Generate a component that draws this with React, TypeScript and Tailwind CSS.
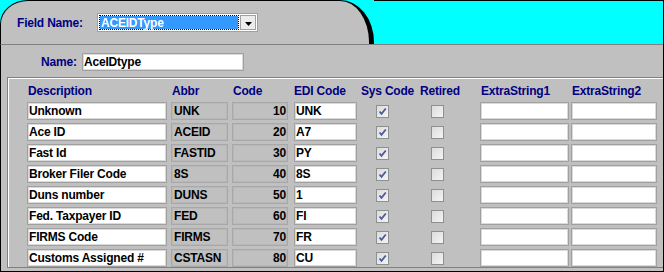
import React from "react";

type Row = {
    desc: string;
    abbr: string;
    code: string;
    edi: string;
    sys: boolean;
    retired: boolean;
};

const rows: Row[] = [
    { desc: "Unknown", abbr: "UNK", code: "10", edi: "UNK", sys: true, retired: false },
    { desc: "Ace ID", abbr: "ACEID", code: "20", edi: "A7", sys: true, retired: false },
    { desc: "Fast Id", abbr: "FASTID", code: "30", edi: "PY", sys: true, retired: false },
    { desc: "Broker Filer Code", abbr: "8S", code: "40", edi: "8S", sys: true, retired: false },
    { desc: "Duns number", abbr: "DUNS", code: "50", edi: "1", sys: true, retired: false },
    { desc: "Fed. Taxpayer ID", abbr: "FED", code: "60", edi: "FI", sys: true, retired: false },
    { desc: "FIRMS Code", abbr: "FIRMS", code: "70", edi: "FR", sys: true, retired: false },
    { desc: "Customs Assigned #", abbr: "CSTASN", code: "80", edi: "CU", sys: true, retired: false },
];

function Check({ checked }: { checked: boolean }) {
    return (
        <div className="w-[13px] h-[13px] shrink-0 border border-[#8e8f8f] bg-gradient-to-br from-[#dcdcdc] to-[#f4f4f4] flex items-center justify-center">
            {checked && (
                <svg width="9" height="9" viewBox="0 0 9 9">
                    <path d="M1.5 4.5 L3.5 6.8 L7.8 1.5" fill="none" stroke="#4a5a9c" strokeWidth="1.8" />
                </svg>
            )}
        </div>
    );
}

function WhiteBox({ className, children }: { className: string; children?: React.ReactNode }) {
    return (
        <div
            className={`h-[18px] shrink-0 bg-white border border-[#a0a0a0] shadow-[inset_0_0_0_1px_#dadada] pl-[1px] leading-[16px] text-black whitespace-nowrap overflow-hidden ${className}`}
        >
            {children}
        </div>
    );
}

function GrayBox({ className, children }: { className: string; children?: React.ReactNode }) {
    return (
        <div
            className={`h-[18px] shrink-0 bg-[#c0c0c0] border border-[#a8a8a8] shadow-[inset_0_0_0_1px_#b8b8b8] leading-[16px] text-black whitespace-nowrap overflow-hidden ${className}`}
        >
            {children}
        </div>
    );
}

export default function App() {
    return (
        <div className="w-[664px] h-[272px] flex flex-col bg-[#00ffff] border-r border-b border-black font-['Liberation_Sans',Arial,sans-serif] text-[12px] font-bold tracking-[-0.2px] overflow-hidden">
            {/* top tab */}
            <div className="flex h-[44px] shrink-0">
                <div className="w-[374px] h-[44px] shrink-0 bg-[#c0c0c0] border-t border-l border-r-[5px] border-black rounded-tl-[28px_24px] rounded-tr-[34px_42px] flex items-center pl-[16px]">
                    <div className="w-[80px] text-[#000080]">Field Name:</div>
                    <div className="w-[161px] h-[19px] border border-[#a0a0a0] bg-white p-[1px] flex gap-[1px]">
                        <div className="flex-1 bg-white border border-dotted border-black">
                            <div className="h-full bg-[#3399ff] text-white leading-[15px] pl-[1px]">ACEIDType</div>
                        </div>
                        <div className="w-[16px] border border-[#a0a0a0] bg-[#ececec] flex items-center justify-center">
                            <svg width="7" height="4" viewBox="0 0 7 4" className="mt-[3px]">
                                <path d="M0 0 H7 L3.5 4 Z" fill="black" />
                            </svg>
                        </div>
                    </div>
                </div>
                <div className="flex-1 border-t border-black" />
            </div>

            {/* lower panel */}
            <div className="flex-1 flex flex-col bg-[#c0c0c0] border-t border-t-[#808080] border-l border-l-black overflow-hidden">
                <div className="mt-[8px] flex items-center pl-[40px] h-[18px]">
                    <div className="w-[41px] text-[#000080]">Name:</div>
                    <WhiteBox className="w-[162px]">AceIDtype</WhiteBox>
                </div>

                <div className="mt-[6px] ml-[6px] w-[700px] h-[191px] shrink-0 border border-[#808080] shadow-[inset_1px_1px_0_#ffffff] pl-[19px] flex flex-col">
                    <div className="h-[24px] shrink-0 flex items-center text-[#000080] pt-[1px]">
                        <div className="w-[144px] pl-[1px]">Description</div>
                        <div className="w-[61px] pl-[1px]">Abbr</div>
                        <div className="w-[62px] pl-[1px]">Code</div>
                        <div className="w-[67px]">EDI Code</div>
                        <div className="w-[59px]">Sys Code</div>
                        <div className="w-[60px]">Retired</div>
                        <div className="w-[91px] pl-[1px]">ExtraString1</div>
                        <div className="w-[90px] pl-[1px]">ExtraString2</div>
                    </div>
                    <div className="flex flex-col gap-[3px]">
                        {rows.map((r) => (
                            <div key={r.code} className="flex items-center h-[18px]">
                                <WhiteBox className="w-[140px]">{r.desc}</WhiteBox>
                                <GrayBox className="w-[57px] ml-[4px] pl-[2px]">{r.abbr}</GrayBox>
                                <GrayBox className="w-[56px] ml-[4px] pr-[1px] text-right">{r.code}</GrayBox>
                                <WhiteBox className="w-[63px] ml-[6px]">{r.edi}</WhiteBox>
                                <div className="ml-[19px]">
                                    <Check checked={r.sys} />
                                </div>
                                <div className="ml-[42px]">
                                    <Check checked={r.retired} />
                                </div>
                                <WhiteBox className="w-[89px] ml-[36px]" />
                                <WhiteBox className="w-[86px] ml-[2px]" />
                            </div>
                        ))}
                    </div>
                </div>
            </div>
        </div>
    );
}
